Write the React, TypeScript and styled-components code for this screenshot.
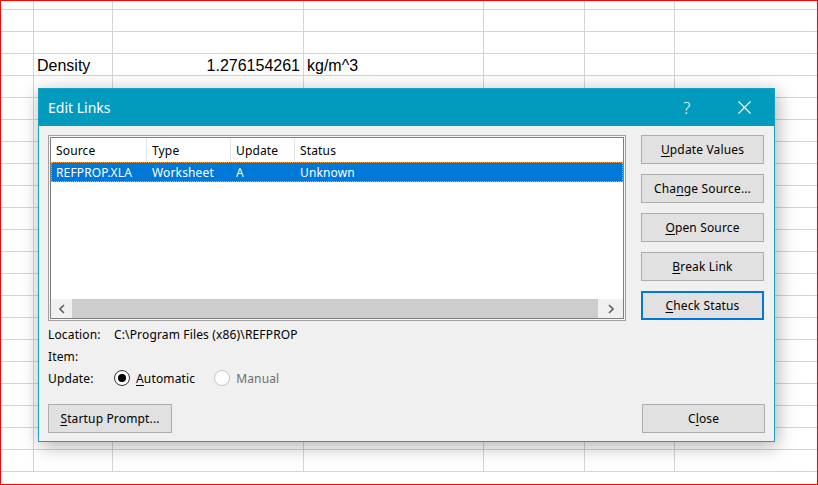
import React from 'react';
import styled, { createGlobalStyle } from 'styled-components';

const GlobalStyle = createGlobalStyle`
  html, body {
    margin: 0;
    padding: 0;
    background: #fff;
  }
  * {
    box-sizing: border-box;
  }
`;

const columns = [33, 79, 191, 180, 101, 90];
const rowCount = 22;

type Cell = { text?: string; align?: 'left' | 'right' };

const densityRow: Cell[] = [
  {},
  { text: 'Density' },
  { text: '1.276154261', align: 'right' },
  { text: 'kg/m^3' },
  {},
  {},
  {},
];

export default function App() {
  const rows: Cell[][] = [];
  for (let r = 0; r < rowCount; r++) {
    rows.push(r === 3 ? densityRow : Array.from({ length: 7 }, () => ({})));
  }

  return (
    <>
      <GlobalStyle />
      <Page>
        <Sheet>
          {rows.map((row, ri) =>
            row.map((cell, ci) => (
              <SheetCell key={`${ri}-${ci}`} $align={cell.align} $last={ci === 6}>
                {cell.text}
              </SheetCell>
            ))
          )}
        </Sheet>

        <Dialog>
          <TitleBar>
            <Title>Edit Links</Title>
            <TitleButtons>
              <HelpGlyph>?</HelpGlyph>
              <CloseGlyph width="13" height="13" viewBox="0 0 13 13">
                <path d="M0.5 0.5 L12.5 12.5 M12.5 0.5 L0.5 12.5" stroke="#fff" strokeWidth="1.1" />
              </CloseGlyph>
            </TitleButtons>
          </TitleBar>

          <Body>
            <TopRow>
              <LeftCol>
                <ListFrame>
                  <ListInner>
                    <HeaderRow>
                      <HeaderCell $w={96}>Source</HeaderCell>
                      <HeaderCell $w={84}>Type</HeaderCell>
                      <HeaderCell $w={64}>Update</HeaderCell>
                      <HeaderCell $last>Status</HeaderCell>
                    </HeaderRow>
                    <SelectedRow>
                      <RowCell $w={96}>REFPROP.XLA</RowCell>
                      <RowCell $w={84}>Worksheet</RowCell>
                      <RowCell $w={64}>A</RowCell>
                      <RowCell>Unknown</RowCell>
                    </SelectedRow>
                    <ListSpacer />
                    <ScrollBar>
                      <ScrollArrow $w={21}>
                        <svg width="6" height="10" viewBox="0 0 6 10">
                          <polyline points="5,1 1,5 5,9" fill="none" stroke="#606060" strokeWidth="1.6" />
                        </svg>
                      </ScrollArrow>
                      <ScrollThumb />
                      <ScrollArrow $w={25}>
                        <svg width="6" height="10" viewBox="0 0 6 10">
                          <polyline points="1,1 5,5 1,9" fill="none" stroke="#606060" strokeWidth="1.6" />
                        </svg>
                      </ScrollArrow>
                    </ScrollBar>
                  </ListInner>
                </ListFrame>

                <InfoBlock>
                  <InfoRow>
                    <InfoLabel>Location:</InfoLabel>
                    <span>C:\Program Files (x86)\REFPROP</span>
                  </InfoRow>
                  <InfoRow>
                    <InfoLabel>Item:</InfoLabel>
                  </InfoRow>
                  <InfoRow>
                    <InfoLabel>Update:</InfoLabel>
                    <RadioOption>
                      <Radio $checked />
                      <span>
                        <Key>A</Key>utomatic
                      </span>
                    </RadioOption>
                    <RadioOption $disabled>
                      <Radio />
                      <span>Manual</span>
                    </RadioOption>
                  </InfoRow>
                </InfoBlock>
              </LeftCol>

              <ButtonCol>
                <Button>
                  <Key>U</Key>pdate Values
                </Button>
                <Button>
                  Cha<Key>n</Key>ge Source...
                </Button>
                <Button>
                  <Key>O</Key>pen Source
                </Button>
                <Button>
                  <Key>B</Key>reak Link
                </Button>
                <Button $focused>
                  <Key>C</Key>heck Status
                </Button>
              </ButtonCol>
            </TopRow>

            <BottomRow>
              <Button $w={124}>
                <Key>S</Key>tartup Prompt...
              </Button>
              <Button>
                C<Key>l</Key>ose
              </Button>
            </BottomRow>
          </Body>
        </Dialog>
      </Page>
    </>
  );
}

const Page = styled.div`
  position: relative;
  width: 818px;
  height: 485px;
  border: 1px solid #ff0000;
  overflow: hidden;
  background: #fff;
`;

const Sheet = styled.div`
  display: grid;
  grid-template-columns: ${columns.map((c) => `${c}px`).join(' ')} 1fr;
  grid-template-rows: 9px repeat(${rowCount - 1}, 22px);
`;

const SheetCell = styled.div<{ $align?: 'left' | 'right'; $last?: boolean }>`
  border-bottom: 1px solid #d4d4d4;
  border-right: ${(p) => (p.$last ? 'none' : '1px solid #d4d4d4')};
  font-family: 'Liberation Sans', Arial, sans-serif;
  font-size: 16px;
  color: #000;
  display: flex;
  align-items: center;
  justify-content: ${(p) => (p.$align === 'right' ? 'flex-end' : 'flex-start')};
  padding: 2px 3px 0;
  white-space: nowrap;
  overflow: visible;
`;

const Dialog = styled.div`
  position: absolute;
  left: 37px;
  top: 87px;
  width: 737px;
  height: 354px;
  border: 1px solid #19a0c2;
  background: #f0f0f0;
  box-shadow: 2px 4px 18px rgba(0, 0, 0, 0.32);
  display: flex;
  flex-direction: column;
  font-family: 'Noto Sans', 'Open Sans', sans-serif;
  font-size: 12px;
  letter-spacing: 0.15px;
  color: #000;
`;

const TitleBar = styled.div`
  height: 37px;
  background: #029bbd;
  display: flex;
  align-items: center;
  justify-content: space-between;
  padding-left: 9px;
`;

const Title = styled.div`
  color: #fff;
  font-size: 14px;
  letter-spacing: 0;
`;

const TitleButtons = styled.div`
  display: flex;
  align-items: center;
`;

const HelpGlyph = styled.div`
  width: 14px;
  margin-right: 44px;
  text-align: center;
  color: #fff;
  font-size: 16px;
  font-weight: 300;
`;

const CloseGlyph = styled.svg`
  margin-right: 23px;
`;

const Body = styled.div`
  flex: 1;
  display: flex;
  flex-direction: column;
  padding: 9px 9px 8px 9px;
`;

const TopRow = styled.div`
  display: flex;
  gap: 15px;
`;

const LeftCol = styled.div`
  width: 578px;
  display: flex;
  flex-direction: column;
`;

const ListFrame = styled.div`
  height: 186px;
  border: 1px solid #a0a0a0;
  padding: 1px;
  background: #f7f7f7;
`;

const ListInner = styled.div`
  height: 100%;
  border: 1px solid #7f7f7f;
  background: #fff;
  display: flex;
  flex-direction: column;
`;

const HeaderRow = styled.div`
  display: flex;
  height: 24px;
  flex-shrink: 0;
`;

const HeaderCell = styled.div<{ $w?: number; $last?: boolean }>`
  ${(p) => (p.$w ? `width: ${p.$w}px;` : 'flex: 1;')}
  border-right: ${(p) => (p.$last ? 'none' : '1px solid #e5e5e5')};
  padding-left: 5px;
  display: flex;
  align-items: center;
  color: #000;
`;

const SelectedRow = styled.div`
  display: flex;
  height: 20px;
  flex-shrink: 0;
  background: #0078d7;
  outline: 1px dotted #f7a74a;
  outline-offset: -1px;
  color: #fff;
`;

const RowCell = styled.div<{ $w?: number }>`
  ${(p) => (p.$w ? `width: ${p.$w}px;` : 'flex: 1;')}
  padding-left: 5px;
  display: flex;
  align-items: center;
`;

const ListSpacer = styled.div`
  flex: 1;
`;

const ScrollBar = styled.div`
  height: 19px;
  display: flex;
  background: #f0f0f0;
  flex-shrink: 0;
`;

const ScrollArrow = styled.div<{ $w: number }>`
  width: ${(p) => p.$w}px;
  display: flex;
  align-items: center;
  justify-content: center;
`;

const ScrollThumb = styled.div`
  flex: 1;
  background: #cdcdcd;
`;

const InfoBlock = styled.div`
  display: flex;
  flex-direction: column;
  margin-top: 2px;
`;

const InfoRow = styled.div`
  height: 22px;
  display: flex;
  align-items: center;
`;

const InfoLabel = styled.span`
  width: 66px;
`;

const RadioOption = styled.label<{ $disabled?: boolean }>`
  display: flex;
  align-items: center;
  gap: 6px;
  margin-right: 19px;
  color: ${(p) => (p.$disabled ? '#6d6d6d' : '#000')};
`;

const Radio = styled.span<{ $checked?: boolean }>`
  width: 16px;
  height: 16px;
  border-radius: 50%;
  border: ${(p) => (p.$checked ? '1.5px solid #333' : '1px solid #c6c6c6')};
  background: #fff;
  display: flex;
  align-items: center;
  justify-content: center;
  &::after {
    content: '';
    width: 8px;
    height: 8px;
    border-radius: 50%;
    background: ${(p) => (p.$checked ? '#000' : 'transparent')};
  }
`;

const ButtonCol = styled.div`
  width: 123px;
  display: flex;
  flex-direction: column;
  gap: 10px;
`;

const Button = styled.div<{ $focused?: boolean; $w?: number }>`
  width: ${(p) => p.$w ?? 123}px;
  height: 29px;
  background: #e1e1e1;
  border: ${(p) => (p.$focused ? '2px solid #0078d7' : '1px solid #adadad')};
  display: flex;
  align-items: center;
  justify-content: center;
  white-space: nowrap;
`;

const Key = styled.span`
  text-decoration: underline;
  text-underline-offset: 2px;
`;

const BottomRow = styled.div`
  margin-top: auto;
  display: flex;
  justify-content: space-between;
`;
